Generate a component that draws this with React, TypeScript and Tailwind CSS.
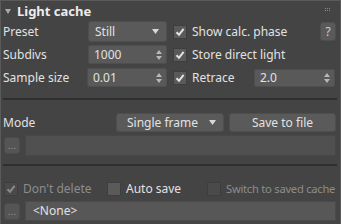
import React from 'react'

const font = { fontFamily: '"Noto Sans", "Open Sans", sans-serif' }

function Check({ checked, disabled }: { checked?: boolean; disabled?: boolean }) {
  return (
    <span
      className={`inline-flex shrink-0 w-[14px] h-[14px] items-center justify-center border border-[#3e3e3e] ${disabled ? 'bg-[#4a4a4a]' : 'bg-[#5a5a5a]'}`}
    >
      {checked && (
        <svg width="10" height="10" viewBox="0 0 10 10" aria-hidden="true">
          <path
            d="M1.5 5.2 L4 7.8 L8.6 1.8"
            fill="none"
            stroke={disabled ? '#8a8a8a' : '#e4e4e4'}
            strokeWidth="2"
          />
        </svg>
      )}
    </span>
  )
}

function CheckLabel({
  label,
  checked,
  disabled,
  tight,
}: {
  label: string
  checked?: boolean
  disabled?: boolean
  tight?: boolean
}) {
  return (
    <div className="flex items-center gap-[5px] whitespace-nowrap">
      <Check checked={checked} disabled={disabled} />
      <span className={`${disabled ? 'text-[#8c8c8c]' : 'text-[#e2e2e2]'} ${tight ? 'text-[11.2px] tracking-[-0.25px]' : ''}`}>
        {label}
      </span>
    </div>
  )
}

function Dropdown({ value, className }: { value: string; className: string }) {
  return (
    <div className={`flex items-center justify-between rounded-[3px] bg-[#5a5a5a] border border-[#4e4e4e] pl-[6px] pr-[7px] ${className}`}>
      <span>{value}</span>
      <svg width="7" height="5" viewBox="0 0 7 5" aria-hidden="true">
        <path d="M0 0 L7 0 L3.5 5 Z" fill="#d8d8d8" />
      </svg>
    </div>
  )
}

function Spinner({ value, className }: { value: string; className: string }) {
  return (
    <div className={`flex items-center justify-between rounded-[2px] bg-[#595959] border border-[#4e4e4e] pl-[5px] pr-[4px] ${className}`}>
      <span>{value}</span>
      <svg width="6" height="10" viewBox="0 0 6 10" aria-hidden="true">
        <path d="M0 4 L6 4 L3 0 Z M0 6 L6 6 L3 10 Z" fill="#b8b8b8" />
      </svg>
    </div>
  )
}

function DotsButton() {
  return (
    <div className="w-[16px] h-[17px] rounded-[3px] bg-[#555555] border border-[#4b4b4b] flex items-end justify-center pb-[3px]">
      <span className="text-[9px] leading-none text-[#9a9a9a] tracking-[0.5px]">...</span>
    </div>
  )
}

export default function App() {
  return (
    <div
      style={font}
      className="w-[341px] h-[224px] bg-[#444444] text-[12px] leading-none text-[#e2e2e2] overflow-hidden border-t border-l border-r border-[#5a5a5a]"
    >
      {/* header */}
      <div className="relative h-[20px] flex items-center pl-[4px] gap-[6px]">
        <svg width="6" height="5" viewBox="0 0 6 5" aria-hidden="true">
          <path d="M0 0 L6 0 L3 5 Z" fill="#aaaaaa" />
        </svg>
        <span className="font-bold text-[13px] text-[#ececec]">Light cache</span>
        <div className="absolute right-[10px] top-[7px] grid grid-cols-3 gap-[1px]">
          {Array.from({ length: 6 }).map((_, i) => (
            <span key={i} className="w-[1px] h-[1px] bg-[#8a8a8a]" />
          ))}
        </div>
      </div>

      {/* params */}
      <div className="flex flex-col gap-[3px] pl-[2px]">
        <div className="flex items-center h-[21px]">
          <span className="w-[85px]">Preset</span>
          <Dropdown value="Still" className="w-[79px] h-[21px]" />
          <div className="ml-[6px] w-[147px]">
            <CheckLabel label="Show calc. phase" checked />
          </div>
          <div className="w-[16px] h-[19px] rounded-[3px] bg-[#5a5a5a] border border-[#4e4e4e] flex items-center justify-center text-[#d0d0d0]">
            ?
          </div>
        </div>
        <div className="flex items-center h-[19px]">
          <span className="w-[85px]">Subdivs</span>
          <Spinner value="1000" className="w-[79px] h-[19px]" />
          <div className="ml-[6px]">
            <CheckLabel label="Store direct light" checked />
          </div>
        </div>
        <div className="flex items-center h-[19px] mt-[1px]">
          <span className="w-[84px]">Sample size</span>
          <Spinner value="0.01" className="w-[80px] h-[19px]" />
          <div className="ml-[6px] w-[81px]">
            <CheckLabel label="Retrace" checked />
          </div>
          <Spinner value="2.0" className="w-[81px] h-[18px]" />
        </div>
      </div>

      <div className="mx-[2px] mt-[11px] h-[2px] w-[334px] bg-[#2f2f2f]" />

      <div className="flex items-center h-[19px] mt-[13px] pl-[2px]">
        <span className="w-[113px]">Mode</span>
        <Dropdown value="Single frame" className="w-[108px] h-[19px] pl-[10px]" />
        <div className="ml-[5px] w-[107px] h-[19px] rounded-[3px] bg-[#5a5a5a] border border-[#4e4e4e] flex items-center justify-center">
          Save to file
        </div>
      </div>

      <div className="flex items-center gap-[5px] mt-[3px] pl-[3px]">
        <DotsButton />
        <div className="w-[311px] h-[21px] bg-[#505050] border border-[#474747]" />
      </div>

      <div className="mx-[2px] mt-[8px] h-[2px] w-[334px] bg-[#2f2f2f]" />

      <div className="flex items-center h-[16px] mt-[15px] pl-[3px]">
        <div className="w-[103px] shrink-0">
          <CheckLabel label="Don't delete" checked disabled />
        </div>
        <div className="w-[100px] shrink-0">
          <CheckLabel label="Auto save" />
        </div>
        <CheckLabel label="Switch to saved cache" disabled tight />
      </div>

      <div className="flex items-center gap-[5px] mt-[4px] pl-[3px]">
        <DotsButton />
        <div className="w-[311px] h-[20px] bg-[#575757] border border-[#4a4a4a] flex items-center pl-[7px]">
          &lt;None&gt;
        </div>
      </div>
    </div>
  )
}
